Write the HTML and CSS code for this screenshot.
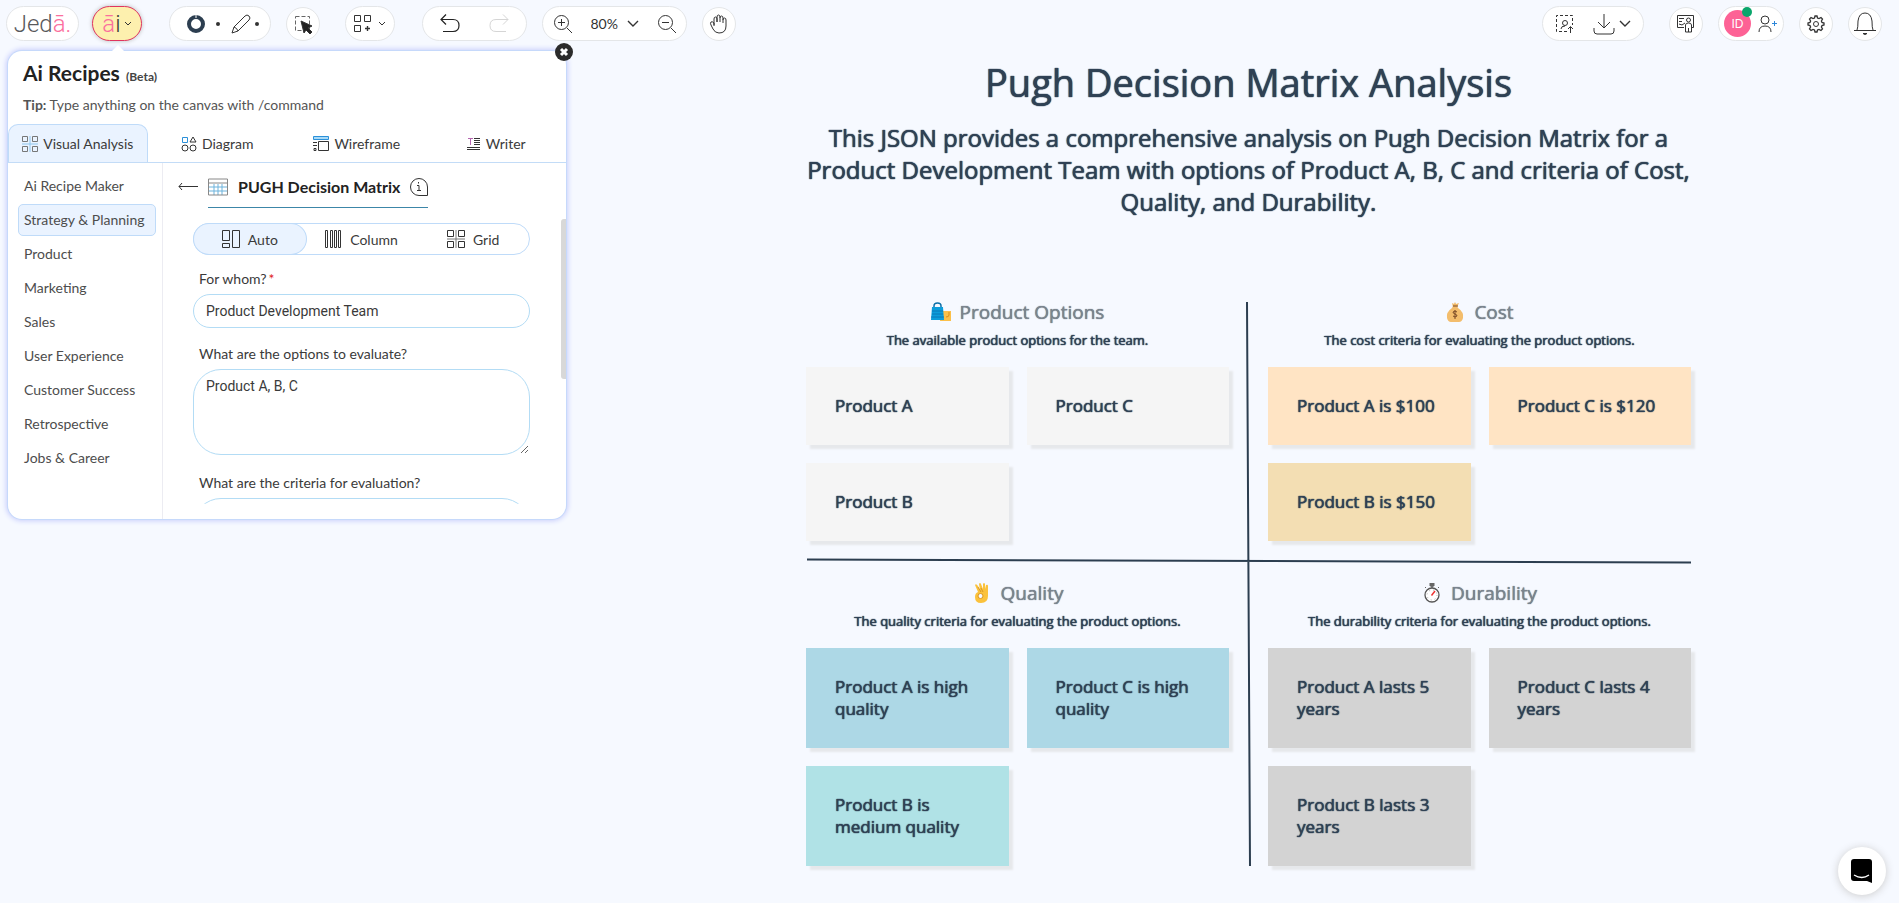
FILE: index.html
```html
<!DOCTYPE html>
<html lang="en">
<head>
    <meta charset="UTF-8">
    <meta name="viewport" content="width=device-width, initial-scale=1.0">
    <title>Jeda.ai</title>
    <link rel="stylesheet" href="styles.css">
</head>
<body>
    <header class="toolbar">
        <a class="pill logo" href="#">Jed<span class="pink">ā.</span></a>
        <button class="pill ai-button" aria-label="Ai Recipes">
            <span class="ai-text"><span class="pink">ā</span>i</span>
            <svg width="8" height="5" viewBox="0 0 8 5"><path d="M1 1l3 3 3-3"/></svg>
        </button>
        <div class="pill style-tools">
            <button aria-label="Shape style">
                <svg width="18" height="18" viewBox="0 0 18 18"><circle cx="9" cy="9" r="7" fill="#fff" stroke="#2c3e50" stroke-width="4"/><path d="M9 0v3" stroke="#fff"/></svg>
            </button>
            <span class="dot"></span>
            <button aria-label="Pen">
                <svg width="20" height="20" viewBox="0 0 20 20"><path d="M1 19l2-6L14 2q2-2 4 0t0 4L7 17zM3 13q3 1 4 4"/></svg>
            </button>
            <span class="dot"></span>
        </div>
        <button class="pill circle select-tool" aria-label="Select">
            <svg width="20" height="20" viewBox="0 0 20 20"><rect x="2.500" y="2.500" width="14" height="14" stroke-dasharray="4 2" stroke="#666"/><path d="M8 7l11 5-4 2 4 4-2 2-4-4-2 3z" fill="#222"/></svg>
        </button>
        <button class="pill grid-tool" aria-label="Add template">
            <svg width="18" height="18" viewBox="0 0 18 18"><path d="M.5.5h6v6h-6zM10.500.5h6v6h-6zM.5 10.500h6v6h-6z"/><path d="M13.500 11v5M11 13.500h5" stroke-width="1.400"/></svg>
            <svg width="8" height="5" viewBox="0 0 8 5"><path d="M1 1l3 3 3-3"/></svg>
        </button>
        <div class="pill history">
            <button aria-label="Undo">
                <svg width="20" height="20" viewBox="0 0 20 20"><path d="M6 .5l-5 5 5 5M1 5.500h12q6 0 6 6t-6 6H3" stroke="#222" stroke-width="1.200"/></svg>
            </button>
            <button class="disabled" aria-label="Redo" disabled>
                <svg width="20" height="20" viewBox="0 0 20 20"><path d="M14 .5l5 5-5 5M19 5.500H7q-6 0-6 6t6 6h10"/></svg>
            </button>
        </div>
        <div class="pill zoom">
            <button aria-label="Zoom in">
                <svg width="20" height="20" viewBox="0 0 20 20"><circle cx="8.500" cy="8.500" r="7"/><path d="M14 14l5 5M8.500 5v7M5 8.500h7"/></svg>
            </button>
            <span class="zoom-value">
                <select aria-label="Zoom level"><option>80%</option></select>
                <svg width="12" height="8" viewBox="0 0 12 8"><path d="M1 1l5 5 5-5" stroke-width="1.400"/></svg>
            </span>
            <button aria-label="Zoom out">
                <svg width="20" height="20" viewBox="0 0 20 20"><circle cx="8.500" cy="8.500" r="7"/><path d="M14 14l5 5M5 8.500h7"/></svg>
            </button>
        </div>
        <button class="pill circle" aria-label="Pan">
            <svg width="20" height="20" viewBox="0 0 20 20"><path d="M5 11V5q0-2 1.500-2T8 5v3M8 8V3q0-2 1.500-2T11 3v5M11 4q0-2 1.500-2T14 4v5M14 6q0-2 1.500-2T17 6v6q0 7-7 7-4 0-6-4l-2-4q-1-2 0-3t3 1v3"/></svg>
        </button>

        <div class="pill export">
            <button aria-label="Capture">
                <svg width="20" height="20" viewBox="0 0 20 20"><path d="M12 17.500H1.500v-16h16V11" stroke-dasharray="3 2"/><circle cx="10" cy="9" r="2.500"/><path d="M6 15q0-3 4-3M15.500 19v-6M13 15l2.500-2.500L18 15"/></svg>
            </button>
            <button class="download" aria-label="Download">
                <svg width="22" height="22" viewBox="0 0 22 22"><path d="M11 1v14M5 9l6 6 6-6M1 15v3q0 3 3 3h14q3 0 3-3v-3"/></svg>
                <svg width="12" height="8" viewBox="0 0 12 8"><path d="M1 1l5 5 5-5" stroke-width="1.400"/></svg>
            </button>
        </div>
        <button class="pill circle" aria-label="Present">
            <svg width="20" height="20" viewBox="0 0 20 20"><path d="M8 13.500H1.500v-12h16v12H16M3 4.500h5M3 7.500h3M3 10l3 1 3-2"/><circle cx="12.500" cy="6" r="2"/><path d="M9.500 18v-7q0-2 3-2t3 2v7zM12.500 18v-4"/></svg>
        </button>
        <div class="pill users">
            <button class="avatar">ID<span class="status"></span></button>
            <button aria-label="Invite">
                <svg width="20" height="18" viewBox="0 0 20 18"><circle cx="7" cy="5" r="4"/><path d="M1 17q0-6 6-6t6 6"/><path d="M16.500 6v5M14 8.500h5" stroke="#2b86d9"/></svg>
            </button>
        </div>
        <button class="pill circle" aria-label="Settings">
            <svg width="18" height="18" viewBox="0 0 18 18"><path stroke-width="1.300" d="M7.500 3L8 1h2l.5 2 1.500.6L14 2.500 15.500 4l-1.100 2L15 7.500l2 .5v2l-2 .5-.6 1.500 1.100 2L14 15.500l-2-1.100-1.500.6-.5 2H8l-.5-2-1.500-.6-2 1.100L2.500 14l1.100-2L3 10.500 1 10V8l2-.5L3.600 6 2.500 4 4 2.500l2 1.100z"/><circle cx="9" cy="9" r="2.500"/></svg>
        </button>
        <button class="pill circle" aria-label="Notifications">
            <svg width="22" height="24" viewBox="0 0 22 24"><path d="M3 18q1-2 1-9 1-8 7-8t7 8q0 7 1 9M0 18.500h22"/><path d="M9 21.500h4q-2 2-4 0z" fill="#444"/></svg>
        </button>
    </header>

    <main class="workspace">
        <section class="panel">
            <span class="pointer"></span>
            <button class="close" aria-label="Close">
                <svg width="18" height="18" viewBox="0 0 18 18"><circle cx="9" cy="9" r="9" fill="#2b2b2b" stroke="none"/><path d="M6 6l6 6M12 6l-6 6" stroke="#fff" stroke-width="3"/></svg>
            </button>
            <h2>Ai Recipes <small>(Beta)</small></h2>
            <p class="tip"><b>Tip:</b> Type anything on the canvas with /command</p>

            <nav class="tabs">
                <button class="tab active">
                    <svg width="16" height="16" viewBox="0 0 16 16"><path d="M.5.5h5v5h-5zM10.500.5h5v5h-5zM.5 10.500h5v5h-5zM10.500 10.500h5v5h-5z" stroke="#777"/><path d="M8 0v16M0 8h16" stroke="#8fc6ee"/></svg>
                    Visual Analysis
                </button>
                <button class="tab">
                    <svg width="16" height="16" viewBox="0 0 16 16"><path d="M1.500 1.500h5v5h-5z" stroke="#2b90d9"/><path d="M12 1l3 5H9z"/><circle cx="4" cy="12" r="3"/><circle cx="12" cy="12" r="3"/></svg>
                    Diagram
                </button>
                <button class="tab">
                    <svg width="16" height="16" viewBox="0 0 16 16"><path d="M.5.5h15v3H.5z" fill="#a9daf7" stroke="#2b90d9"/><path d="M5.500 5.500h10v9h-10zM0 6.500h4M0 9.500h4M1 12.500h2v2H1z"/></svg>
                    Wireframe
                </button>
                <button class="tab">
                    <svg width="14" height="14" viewBox="0 0 14 14"><path d="M1 1.500h5M3.500 1.500V8" stroke="#b565b0"/><path d="M7 1.500h6M7 3.500h6M7 5.500h6M7 7.500h6M0 10.500h13M0 12.500h13"/></svg>
                    Writer
                </button>
            </nav>

            <div class="panel-body">
                <nav class="categories">
                    <a href="#">Ai Recipe Maker</a>
                    <a href="#" class="active">Strategy &amp; Planning</a>
                    <a href="#">Product</a>
                    <a href="#">Marketing</a>
                    <a href="#">Sales</a>
                    <a href="#">User Experience</a>
                    <a href="#">Customer Success</a>
                    <a href="#">Retrospective</a>
                    <a href="#">Jobs &amp; Career</a>
                </nav>

                <div class="recipe">
                    <div class="recipe-head">
                        <button aria-label="Back">
                            <svg width="20" height="8" viewBox="0 0 20 8"><path d="M4 1L1 4.500 4 8M1 4.500h19"/></svg>
                        </button>
                        <div class="recipe-title">
                            <svg width="20" height="18" viewBox="0 0 20 18"><path d="M6 6v11M10 6v11M14 6v11M1 9h18M1 13h18" stroke="#6db3dc"/><path d="M.5 1h19v16H.5zM1 5h18" stroke="#888"/></svg>
                            <h3>PUGH Decision Matrix</h3>
                            <button aria-label="Info">
                                <svg width="18" height="18" viewBox="0 0 18 18"><path d="M9 .5a8.500 8.500 0 1 0 0 17h8.500V9A8.500 8.500 0 0 0 9 .5zM7 7.500h2v5M7 12.500h4M8.500 4v1.500"/></svg>
                            </button>
                        </div>
                    </div>

                    <div class="recipe-scroll">
                        <form class="recipe-form">
                            <div class="segments">
                                <label>
                                    <input type="radio" name="layout" checked>
                                    <svg width="18" height="18" viewBox="0 0 18 18"><path d="M.5.5h7v10h-7zM.5 13.500h7v4h-7zM10.500.5h7v17h-7z"/></svg>
                                    Auto
                                </label>
                                <label>
                                    <input type="radio" name="layout">
                                    <svg width="17" height="18" viewBox="0 0 17 18"><path d="M.5.5h2v17h-2zM5.500.5h2v17h-2zM9.500.5h2v17h-2zM13.500.5h2v17h-2z"/></svg>
                                    Column
                                </label>
                                <label>
                                    <input type="radio" name="layout">
                                    <svg width="18" height="18" viewBox="0 0 18 18"><path d="M.5.5h6v6h-6zM11.500.5h6v6h-6zM.5 11.500h6v6h-6zM11.500 11.500h6v6h-6z"/><path d="M9 0v18M0 9h18" stroke="#777"/></svg>
                                    Grid
                                </label>
                            </div>
                            <label class="field-label" for="whom">For whom?<span class="required">*</span></label>
                            <input class="field" id="whom" type="text" value="Product Development Team">
                            <label class="field-label" for="options">What are the options to evaluate?</label>
                            <textarea class="field" id="options">Product A, B, C</textarea>
                            <label class="field-label" for="criteria">What are the criteria for evaluation?</label>
                            <textarea class="field" id="criteria"></textarea>
                        </form>
                        <span class="scroll-thumb"></span>
                    </div>
                </div>
            </div>
        </section>

        <article class="board">
            <h1>Pugh Decision Matrix Analysis</h1>
            <p class="summary">This JSON provides a comprehensive analysis on Pugh Decision Matrix for a Product Development Team with options of Product A, B, C and criteria of Cost, Quality, and Durability.</p>

            <div class="matrix">
                <svg class="axes" viewBox="0 0 885 563" preserveAspectRatio="none"><path d="M441 0l3 563M1 257l884 3" stroke="#2c3e50" stroke-width="2"/></svg>

                <section class="quadrant">
                    <h2>
                        <svg width="20" height="20" viewBox="0 0 20 20"><path d="M3 7V4q0-3 3.500-3T10 4v3" stroke="#0b6fa8" stroke-width="1.500"/><path d="M10 9h10v10H9z" fill="#fbc04a" stroke="none"/><path d="M18 10v3q0 2-3 2" stroke="#d98f1c"/><path d="M1 5h11l1 13H0z" fill="#0d9ddb" stroke="none"/><path d="M1 9h11M1 12h11M0 15h13" stroke="#0a78b8"/></svg>
                        Product Options
                    </h2>
                    <p>The available product options for the team.</p>
                    <div class="cards">
                        <div class="card smoke">Product A</div>
                        <div class="card smoke">Product C</div>
                        <div class="card smoke">Product B</div>
                    </div>
                </section>

                <section class="quadrant">
                    <h2>
                        <svg width="20" height="20" viewBox="0 0 20 20"><path d="M7 1l2 1 1-2 1 2 3-1-2 4H8z" fill="#f0b866" stroke="none"/><path d="M8 4h4l1 2q6 4 5 10-1 4-4 4H6q-3 0-4-4Q1 10 7 6z" fill="#f3bd6c" stroke="none"/><path d="M8 4h5" stroke="#7a4a26"/><path d="M12 10q-2-2-4 0 0 1.500 2 2t2 2q-2 2-4 0M10 8v9" stroke="#7a4a26"/></svg>
                        Cost
                    </h2>
                    <p>The cost criteria for evaluating the product options.</p>
                    <div class="cards">
                        <div class="card bisque">Product A is $100</div>
                        <div class="card bisque">Product C is $120</div>
                        <div class="card wheat">Product B is $150</div>
                    </div>
                </section>

                <section class="quadrant">
                    <h2>
                        <svg width="20" height="20" viewBox="0 0 20 20"><path d="M3 2q1-2 3 1l2 4L7 1q1-2 2 0l2 5V1q1-2 2 0v5l1-4q2-1 2 1v10q0 7-7 7-6 0-6-6 0-4 3-5z" fill="#fbc23c" stroke="none"/><circle cx="8.500" cy="13" r="2.500" fill="#f5f9ff" stroke="#dd971e"/><path d="M6 4l3 5M9 5l2 4" stroke="#c9851d" stroke-width=".7"/></svg>
                        Quality
                    </h2>
                    <p>The quality criteria for evaluating the product options.</p>
                    <div class="cards">
                        <div class="card blue">Product A is high quality</div>
                        <div class="card blue">Product C is high quality</div>
                        <div class="card turquoise">Product B is medium quality</div>
                    </div>
                </section>

                <section class="quadrant">
                    <h2>
                        <svg width="20" height="20" viewBox="0 0 20 20"><path d="M8 0h4v3H8zM4 5L3 4M16 5l1-1" fill="#666" stroke="#666"/><path d="M10 3v2"/><circle cx="10" cy="12" r="7" fill="#fff" stroke="#555" stroke-width="1.300"/><circle cx="10" cy="12" r="5" stroke="#aaa" stroke-dasharray="1 3"/><path d="M9.500 12.500L13 8" stroke="#e33" stroke-width="1.500"/></svg>
                        Durability
                    </h2>
                    <p>The durability criteria for evaluating the product options.</p>
                    <div class="cards">
                        <div class="card gray">Product A lasts 5 years</div>
                        <div class="card gray">Product C lasts 4 years</div>
                        <div class="card gray">Product B lasts 3 years</div>
                    </div>
                </section>
            </div>
        </article>
    </main>

    <button class="chat" aria-label="Open chat">
        <svg width="24" height="26" viewBox="0 0 24 26"><path d="M4 1h15q3 0 3 3v21l-5-2H4q-3 0-3-3V4q0-3 3-3z" fill="#000" stroke="none"/><path d="M4 17q8 5 15 0" stroke="#fff" stroke-width="1.300"/></svg>
    </button>
</body>
</html>
```

FILE: styles.css
```css
* {
    box-sizing: border-box;
}

body {
    margin: 0;
    min-height: 100vh;
    background-color: #f6f9ff;
    color: #3a3a3a;
    font-family: Lato, sans-serif;
    font-size: 14px;
}

h1, h2, h3, p {
    margin: 0;
}

button {
    display: flex;
    align-items: center;
    padding: 0;
    border: none;
    background: none;
    color: inherit;
    font: inherit;
    cursor: pointer;
}

a {
    color: inherit;
    text-decoration: none;
}

svg {
    flex: none;
    fill: none;
    stroke: #333;
    stroke-width: 1;
}

/* Toolbar */
.toolbar {
    display: flex;
    align-items: center;
    gap: 15px;
    height: 47px;
    padding: 0 17px 0 6px;
}

.pill {
    display: flex;
    align-items: center;
    justify-content: center;
    height: 35px;
    border: 1px solid #e4e6e8;
    border-radius: 18px;
    background-color: #fff;
}

.circle {
    width: 34px;
    height: 34px;
}

.logo {
    width: 73px;
    margin-right: -2px;
    color: #58595b;
    font: 300 24px Roboto, sans-serif;
}

.pink {
    color: #fb6f9d;
}

.ai-button {
    width: 50px;
    gap: 3px;
    margin-right: 12px;
    border: 1px solid #e0355f;
    background-color: #fdf0ae;
    box-shadow: 0 0 4px #bbb;
}

.ai-text {
    font: 300 24px Roboto, sans-serif;
}

.style-tools {
    width: 102px;
    gap: 11px;
    padding-left: 6px;
}

.style-tools .dot:last-child {
    margin-left: -7px;
}

.dot {
    width: 4px;
    height: 4px;
    border-radius: 2px;
    background-color: #333;
}

.select-tool {
    margin-right: 10px;
}

.grid-tool {
    width: 50px;
    gap: 6px;
    margin-right: 12px;
}

.history {
    width: 105px;
    gap: 29px;
}

.disabled {
    opacity: 0.2;
}

.zoom {
    width: 145px;
    gap: 18px;
}

.zoom-value {
    display: flex;
    align-items: center;
    gap: 8px;
}

.zoom-value select {
    padding: 0;
    border: none;
    background: none;
    color: #333;
    font: 14px Lato, sans-serif;
    appearance: none;
}

.export {
    width: 102px;
    gap: 18px;
    margin-left: auto;
    margin-right: 10px;
}

.download {
    gap: 4px;
}

.users {
    width: 66px;
    gap: 7px;
}

.avatar {
    position: relative;
    justify-content: center;
    width: 27px;
    height: 27px;
    border-radius: 50%;
    background-color: #fd6295;
    color: #fff;
    font: 12px "Liberation Sans", sans-serif;
}

.status {
    position: absolute;
    top: -3px;
    right: -1px;
    width: 10px;
    height: 10px;
    border-radius: 50%;
    background-color: #0aa66c;
}

.workspace {
    display: grid;
    grid-template-columns: 558px 1fr;
    column-gap: 32px;
    align-items: start;
    padding-left: 8px;
}

/* Recipe panel */
.panel {
    position: relative;
    margin-top: 4px;
    padding-top: 9px;
    border-radius: 14px;
    background-color: #fff;
    box-shadow: 0 0 0 1px #c6d9fb, 0 0 5px 2px #c9cffc;
}

.pointer {
    position: absolute;
    top: -6px;
    left: 104px;
    border: 6px solid transparent;
    border-top: none;
    border-bottom-color: #fff;
}

.close {
    position: absolute;
    top: -8px;
    right: -7px;
}

.panel h2 {
    padding-left: 15px;
    color: #222;
    font-size: 21px;
    line-height: 26px;
}

.panel h2 small {
    margin-left: 1px;
    color: #444;
    font-size: 12px;
}

.tip {
    padding: 5px 15px 9px;
    color: #555;
    line-height: 20px;
}

.tabs {
    display: grid;
    grid-template-columns: repeat(4, 1fr);
    border-bottom: 1px solid #c3dcf7;
}

.tab {
    justify-content: center;
    gap: 5px;
    height: 38px;
    border: 1px solid transparent;
    border-bottom: none;
}

.tab.active {
    border-color: #bfdbf9;
    border-radius: 10px 10px 0 0;
    background-color: #eaf3ff;
}

.panel-body {
    display: flex;
}

.categories {
    display: flex;
    flex-direction: column;
    gap: 2px;
    width: 155px;
    padding: 7px 6px 0 10px;
    border-right: 1px solid #ececf2;
    color: #4d4d4d;
}

.categories a {
    padding: 6px 5px;
    border: 1px solid transparent;
    border-radius: 5px;
    line-height: 18px;
}

.categories .active {
    border-color: #bfdbf9;
    background-color: #eaf3ff;
}

.recipe {
    flex: 1;
    padding-bottom: 15px;
}

.recipe-head {
    display: flex;
    align-items: flex-start;
    gap: 10px;
    height: 56px;
    padding: 8px 15px;
}

.recipe-head > button {
    height: 30px;
}

.recipe-title {
    display: flex;
    align-items: center;
    gap: 10px;
    height: 37px;
    padding-bottom: 5px;
    border-bottom: 1px solid #3c86a8;
}

.recipe-title h3 {
    color: #222;
    font-size: 16px;
}

.recipe-scroll {
    display: flex;
    height: 285px;
}

.recipe-form {
    flex: 1;
    padding: 4px 31px 0 30px;
    overflow-y: auto;
    scrollbar-width: none;
}

.scroll-thumb {
    width: 5px;
    height: 160px;
    border-radius: 3px 0 0 3px;
    background-color: #d8d8d8;
}

.segments {
    display: grid;
    grid-template-columns: repeat(3, 1fr);
    height: 32px;
    border: 1px solid #bfdbf9;
    border-radius: 16px;
}

.segments label {
    display: flex;
    align-items: center;
    justify-content: center;
    gap: 8px;
    border-radius: 15px;
}

.segments input {
    position: absolute;
    opacity: 0;
}

.segments label:has(input:checked) {
    background-color: #eaf3ff;
    box-shadow: 0 0 0 1px #bfdbf9;
}

.field-label {
    display: block;
    padding: 14px 6px 5px;
    line-height: 20px;
}

.required {
    margin-left: 2px;
    color: #e02020;
}

.field {
    display: block;
    width: 100%;
    height: 34px;
    padding: 0 12px;
    border: 1px solid #b3dcf5;
    border-radius: 17px;
    background: none;
    color: #3a3a3a;
    font: 14px/18px Roboto, sans-serif;
}

textarea.field {
    height: 86px;
    padding: 7px 12px;
    border-radius: 28px;
}

.field + .field-label {
    padding-top: 16px;
}

textarea + .field-label {
    margin-top: 2px;
}

/* Board */
.board {
    width: 885px;
    max-width: 100%;
    margin: 0 auto;
    color: #2f4154;
    font-family: "Open Sans", sans-serif;
    text-shadow: 0 0 1px #2f4154, 0 0 1px #2f4154;
}

.board h1 {
    padding-top: 8px;
    font-size: 38px;
    font-weight: 400;
    line-height: 54px;
    text-align: center;
}

.summary {
    padding-top: 13px;
    font-size: 24px;
    line-height: 32px;
    text-align: center;
}

.matrix {
    position: relative;
    display: grid;
    grid-template-columns: 1fr 1fr;
    column-gap: 39px;
    row-gap: 42px;
    margin-top: 84px;
}

.axes {
    position: absolute;
    width: 100%;
    height: 100%;
}

.quadrant h2 {
    display: flex;
    align-items: center;
    justify-content: center;
    gap: 9px;
    color: #7b858f;
    font-size: 19px;
    font-weight: 400;
    line-height: 20px;
    text-shadow: 0 0 1px #4a545e;
}

.quadrant p {
    padding: 8px 0 17px;
    font-size: 13px;
    line-height: 20px;
    text-align: center;
}

.cards {
    display: grid;
    grid-template-columns: 1fr 1fr;
    gap: 18px;
}

.card {
    padding: 28px 29px;
    box-shadow: 4px 4px 2px #e6e8eb;
    font-size: 17px;
    line-height: 22px;
}

.smoke { background-color: #f5f5f5; }
.bisque { background-color: #ffe4c4; }
.wheat { background-color: #f3deb3; }
.blue { background-color: #add8e6; }
.turquoise { background-color: #b0e2e6; }
.gray { background-color: #d3d3d3; }

.chat {
    position: fixed;
    right: 13px;
    bottom: 8px;
    justify-content: center;
    width: 48px;
    height: 48px;
    border-radius: 50%;
    background-color: #fff;
    box-shadow: 0 1px 8px #ccc;
}
```
